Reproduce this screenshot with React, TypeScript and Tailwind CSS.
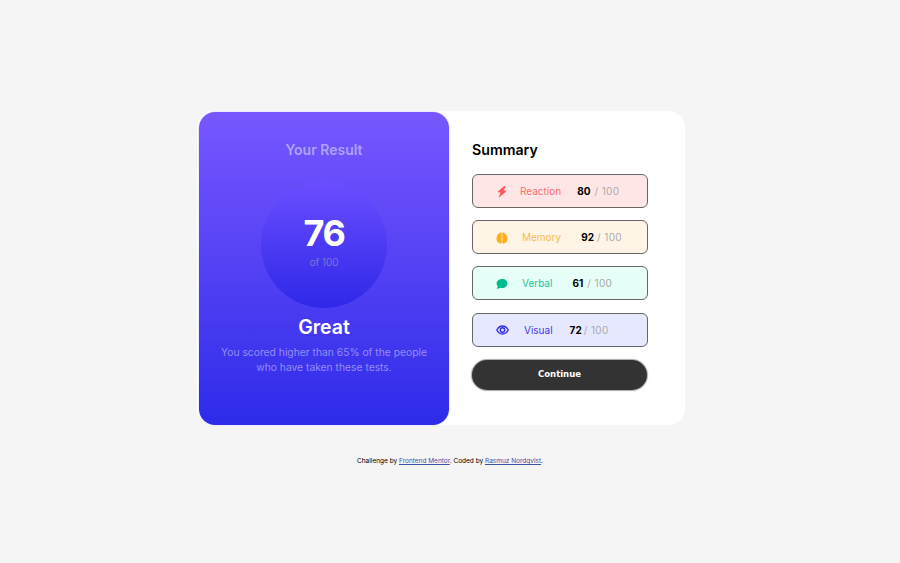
import React from "react";

type Row = {
  label: string;
  score: number;
  box: string;
  text: string;
  labelGap: string;
  scoreGap: string;
  slashGap: string;
  icon: React.ReactNode;
};

const BoltIcon = () => (
  <svg width="12" height="12" viewBox="0 0 12 12" className="text-[#ff5757]">
    <path d="M8 .3 1.900 5.400c-.4.4-.2.9.3.9h2.300L2.800 11.700l7.300-6.300c.4-.3.2-.9-.3-.9H7.400L9.600 1C9.800.3 8.700-.2 8 .3Z" fill="currentColor" />
  </svg>
);

const BrainIcon = () => (
  <svg width="12" height="12" viewBox="0 0 12 12" className="text-[#ffb01f]">
    <path d="M5.700.8v10.400c-.8.500-2 .4-2.600-.3C1.800 10.600.8 9.400.9 8.200.300 7.300.300 5.700.9 4.700.9 3.200 1.900 1.800 3.100 1.400 3.800.6 5 .4 5.700.8Z" fill="currentColor" />
    <path d="M6.300.8v10.400c.8.500 2 .4 2.600-.3 1.200-.3 2.200-1.500 2.100-2.700.6-.9.6-2.500 0-3.500 0-1.500-1-2.900-2.200-3.300C8.200.6 7 .4 6.300.8Z" fill="currentColor" />
  </svg>
);

const ChatIcon = () => (
  <svg width="12" height="12" viewBox="0 0 12 12" className="text-[#00bb8f]">
    <path d="M6.300 1C3.100 1 .6 2.900.6 5.400c0 1.100.4 2 1.100 2.800-.1.900-.5 1.700-1.100 2.500 1.500.1 2.800-.3 3.700-1 .6.200 1.300.3 2 .3 2.900 0 5.100-2 5.100-4.600S9.200 1 6.300 1Z" fill="currentColor" />
  </svg>
);

const EyeIcon = () => (
  <svg width="13" height="12" viewBox="0 0 13 12" fill="none" stroke="currentColor" className="text-[#3330ee]">
    <path d="M.8 6C2.200 3.300 4.200 2 6.500 2s4.300 1.300 5.700 4c-1.400 2.700-3.400 4-5.700 4S2.200 8.700.8 6Z" strokeWidth="1.400" />
    <circle cx="6.500" cy="6" r="2.200" strokeWidth="1.400" />
  </svg>
);

const rows: Row[] = [
  {
    label: "Reaction",
    score: 80,
    box: "bg-[#ffe6e6]",
    text: "text-[#ff6f6f]",
    labelGap: "ml-[12px]",
    scoreGap: "ml-[16px]",
    slashGap: "ml-[4px]",
    icon: <BoltIcon />,
  },
  {
    label: "Memory",
    score: 92,
    box: "bg-[#fff5e6]",
    text: "text-[#ffb94a]",
    labelGap: "ml-[14px]",
    scoreGap: "ml-[20px]",
    slashGap: "ml-[3px]",
    icon: <BrainIcon />,
  },
  {
    label: "Verbal",
    score: 61,
    box: "bg-[#e6fff8]",
    text: "text-[#1cc49c]",
    labelGap: "ml-[14px]",
    scoreGap: "ml-[20px]",
    slashGap: "ml-[4px]",
    icon: <ChatIcon />,
  },
  {
    label: "Visual",
    score: 72,
    box: "bg-[#e6e8ff]",
    text: "text-[#3f3bea]",
    labelGap: "ml-[15px]",
    scoreGap: "ml-[17px]",
    slashGap: "ml-[2px]",
    icon: <EyeIcon />,
  },
];

export default function App() {
  return (
    <div className="min-h-screen bg-[#f5f5f5] pt-[111px] font-['Inter',sans-serif]">
      <div className="ml-[197px] flex h-[314px] w-[488px] rounded-[16px] bg-white">
        <div className="mt-px ml-[2px] flex h-[313px] w-[250px] flex-col items-center rounded-[16px] bg-linear-to-b/srgb from-[#7857ff] to-[#2e2be9] shadow-[0_0_0_1px_#eceaff]">
          <h2 className="mt-[27px] text-[14px] leading-[22px] font-semibold text-[#aea3ff]">Your Result</h2>
          <div className="mt-[21px] flex h-[126px] w-[126px] flex-col items-center rounded-full bg-linear-to-b/srgb from-[#6a4dff] to-[#2f28e8]">
            <span className="mt-[28px] text-[36px] leading-[46px] font-bold tracking-[-1.500px] text-white">76</span>
            <span className="mt-[-1px] text-[10px] leading-[14px] text-[#7a75d8]">of 100</span>
          </div>
          <h3 className="mt-[6px] text-[19.500px] leading-[27px] font-semibold text-white">Great</h3>
          <p className="mt-[4px] w-[212px] text-center text-[10.300px] leading-[14.500px] text-[#938cf8]">
            You scored higher than 65% of the people who have taken these tests.
          </p>
        </div>
        <div className="ml-[23px] flex w-[176px] flex-col">
          <h2 className="mt-[28px] text-[14.200px] leading-[22px] font-semibold text-black">Summary</h2>
          <ul className="mt-[13px] flex flex-col gap-[12.200px]">
            {rows.map((row) => (
              <li
                key={row.label}
                className={`flex h-[34px] items-center rounded-[6px] border border-[#666] pt-px pl-[23px] text-[10px] ${row.box}`}
              >
                {row.icon}
                <span className={`${row.labelGap} ${row.text}`}>{row.label}</span>
                <span className={`${row.scoreGap} font-bold text-black`}>{row.score}</span>
                <span className={`${row.slashGap} tracking-[0.400px] text-[#aaa]`}>/ 100</span>
              </li>
            ))}
          </ul>
          <button className="mt-[13px] h-[30px] w-[175px] rounded-full bg-[#333] font-['DejaVu_Sans',sans-serif] text-[8.500px] font-bold text-white shadow-[0_0_1px_1px_#aaa]">
            Continue
          </button>
        </div>
      </div>
      <footer className="mt-[31px] text-center text-[6.500px] leading-[11px] text-black">
        Challenge by <a className="text-[#3e52a3] underline">Frontend Mentor</a>. Coded by{" "}
        <a className="text-[#3e52a3] underline">Rasmuz Nordqvist</a>.
      </footer>
    </div>
  );
}
